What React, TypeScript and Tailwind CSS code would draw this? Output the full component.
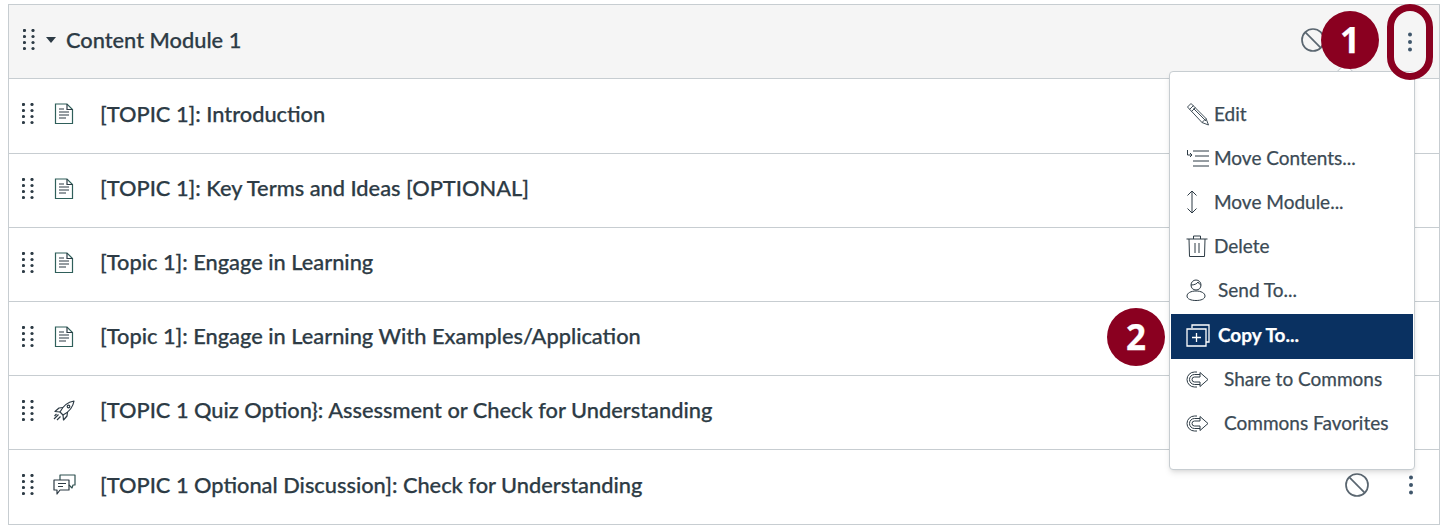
import React from "react";

const Grip = () => (
  <svg width="12" height="22" viewBox="0 0 12 22" className="shrink-0 text-[#2d3b45]" fill="currentColor">
    {[1.5, 7.5, 13.5, 19.5].flatMap((y) => [1.5, 10].map((x) => <circle key={`${x}-${y}`} cx={x} cy={y} r="1.6" />))}
  </svg>
);

const PageIcon = () => (
  <svg width="20" height="22" viewBox="0 0 20 22" fill="none" stroke="#2d3b45" strokeWidth="1.2">
    <path d="M1.500 1h11.500l5.500 5.500V20.500H1.500z" stroke="#2f5f5a" />
    <path d="M13 1v5.500h5.500" />
    <path d="M5 6h5M5 9h10M5 12h10M5 15h7" />
  </svg>
);

const RocketIcon = () => (
  <svg width="22" height="22" viewBox="0 0 22 22" fill="none" stroke="#2d3b45" strokeWidth="1.2" strokeLinejoin="round">
    <path d="M7 12 C10 6 15 2 21 1 C20 7 16 12 10 15z" />
    <path d="M7 12l-5-0.500 4-3.500 4-0.500M10 15l0.500 5 3.500-4 0.500-4" />
    <circle cx="15.500" cy="6.500" r="1.300" />
    <path d="M5.500 14.500L1 19M7.500 16.500L4 20M3.500 14L1.500 16" />
  </svg>
);

const ChatIcon = () => (
  <svg width="23" height="22" viewBox="0 0 23 22" fill="none" stroke="#2d3b45" strokeWidth="1.2" strokeLinejoin="round">
    <path d="M7 6V1h15v10h-2l-1 3-3-3" stroke="#2f5050" />
    <path d="M1 6h15v10H7l-3 4v-4H1z" />
    <path d="M5 9.500h8M5 12.500h5" />
  </svg>
);

const Ban = ({ size = 26 }: { size?: number }) => (
  <svg width={size} height={size} viewBox="0 0 26 26" fill="none" stroke="#5a6670" strokeWidth="1.700">
    <circle cx="13" cy="13" r="11" />
    <path d="M5.200 5.200l15.600 15.600" />
  </svg>
);

const Kebab = () => (
  <svg width="6" height="20" viewBox="0 0 6 20" fill="#3f566b">
    <circle cx="3" cy="2.500" r="2" />
    <circle cx="3" cy="10" r="2" />
    <circle cx="3" cy="17.500" r="2" />
  </svg>
);

const s = { fill: "none", stroke: "#2d3b45", strokeWidth: 1 };

const Edit = () => (
  <svg width="24" height="24" viewBox="0 0 24 24" {...s} stroke="#3f4d57">
    <path d="M1.500 5L5 1.500 20 16.500l2.500 6.500-6.500-2.500z" />
    <path d="M3.500 7.500L7.500 3.500M5.500 9.500l4-4M16 20.500l4-4M7.500 6.500l12.500 12.500" />
  </svg>
);
const MoveContents = () => (
  <svg width="24" height="18" viewBox="0 0 24 18" {...s}>
    <path d="M1.500 1v5h4M4 4l2 2-2 2" />
    <path d="M7 2h16M9 7h14M7 12h16M7 17h16" />
  </svg>
);
const MoveModule = () => (
  <svg width="12" height="24" viewBox="0 0 12 24" {...s}>
    <path d="M6 1v22M1.500 5.500L6 1l4.500 4.500M1.500 18.500L6 23l4.500-4.500" />
  </svg>
);
const Trash = () => (
  <svg width="22" height="22" viewBox="0 0 22 22" {...s}>
    <path d="M0.500 4h21M3 4l0.500 17.500h15L19 4M7.500 4V1h7v3M9 8v10M13 8v10" />
  </svg>
);
const Person = () => (
  <svg width="20" height="22" viewBox="0 0 20 22" {...s}>
    <path d="M5 6a5 5 0 0110 0c0 3-2 5-5 5s-5-2-5-5z" />
    <path d="M5 6c3 0 6-1 7-3 1 1.500 2 3 3 3" />
    <path d="M1 17c0-3 4-5 9-5s9 2 9 5-4 4.500-9 4.500S1 20 1 17z" />
  </svg>
);
const Copy = () => (
  <svg width="24" height="23" viewBox="0 0 24 23" fill="none" stroke="#fff" strokeWidth="1.300">
    <path d="M6 4V1h17v17h-3" />
    <path d="M1 5h19v17H1zM10.500 9v9M6 13.500h9" />
  </svg>
);
const Commons = () => (
  <svg width="23" height="17" viewBox="0 0 23 17" {...s}>
    <path d="M11 1H8.500a7.500 7.500 0 000 15H11" />
    <path d="M14 3.500H8.500a5 5 0 000 10H14" />
    <path d="M14 6H8.500a2.500 2.500 0 000 5H14" />
    <path d="M14 6V1.500l8 7-8 7V11" strokeLinejoin="round" />
  </svg>
);

const rows = [
  { icon: <PageIcon />, text: "[TOPIC 1]: Introduction", h: "h-[75px]" },
  { icon: <PageIcon />, text: "[TOPIC 1]: Key Terms and Ideas [OPTIONAL]", h: "h-[74px]" },
  { icon: <PageIcon />, text: "[Topic 1]: Engage in Learning", h: "h-[74px]" },
  { icon: <PageIcon />, text: "[Topic 1]: Engage in Learning With Examples/Application", h: "h-[74px]" },
  { icon: <RocketIcon />, text: "[TOPIC 1 Quiz Option}: Assessment or Check for Understanding", h: "h-[74px]" },
  { icon: <ChatIcon />, text: "[TOPIC 1 Optional Discussion]: Check for Understanding", h: "h-[74px]", end: true },
];

const menu = [
  { icon: <Edit />, label: "Edit", gap: "w-[28px]", cls: "h-[44px]" },
  { icon: <MoveContents />, label: "Move Contents...", gap: "w-[28px]", cls: "h-[44px]" },
  { icon: <MoveModule />, label: "Move Module...", gap: "w-[28px]", cls: "h-[44px]" },
  { icon: <Trash />, label: "Delete", gap: "w-[28px]", cls: "h-[44px]" },
  { icon: <Person />, label: "Send To...", gap: "w-[32px]", cls: "h-[44px]" },
  { icon: <Copy />, label: "Copy To...", gap: "w-[32px]", cls: "h-[45px] mt-[2px] pb-[3px] bg-[#0a3161] !text-white font-bold" },
  { icon: <Commons />, label: "Share to Commons", gap: "w-[38px]", cls: "h-[44px] pb-[4px]" },
  { icon: <Commons />, label: "Commons Favorites", gap: "w-[38px]", cls: "h-[44px] pb-[4px]" },
];

export default function App() {
  return (
    <div className="relative w-[1444px] h-[526px] overflow-hidden bg-white pt-[4px] pl-[8px] pr-[4px] font-['Lato','Noto_Sans',sans-serif] text-[#2d3b45] [-webkit-text-stroke:0.25px]">
      <div className="border border-[#c7cdd1] h-[521px] flex flex-col">
        <div className="h-[74px] shrink-0 bg-[#f5f5f5] flex items-center pl-[14px] pr-[26px] pb-[3px] border-b border-[#c7cdd1]">
          <Grip />
          <span className="ml-[11px] mr-[10px] w-0 h-0 border-x-[5px] border-x-transparent border-t-[6px] border-t-[#2d3b45]" />
          <span className="text-[21.8px] font-medium">Content Module 1</span>
          <span className="ml-auto mr-[81px] flex"><Ban /></span>
          <span className="flex mt-[3px]"><Kebab /></span>
        </div>
        {rows.map((r, i) => (
          <div key={i} className={`${r.h} shrink-0 flex items-center pl-[13px] pr-[25px] pb-[4px] ${i < rows.length - 1 ? "border-b border-[#c7cdd1]" : ""}`}>
            <Grip />
            <span className="w-[66px] shrink-0 flex pl-[18px]">
              <span className="w-[24px] flex justify-center">{r.icon}</span>
            </span>
            <span className="text-[21.8px] font-medium">{r.text}</span>
            {r.end && (
              <span className="ml-auto flex items-center gap-[38px]">
                <Ban />
                <Kebab />
              </span>
            )}
          </div>
        ))}
      </div>

      <div className="absolute left-[1338px] top-[66px] w-[14px] h-[14px] rotate-45 bg-white border-l border-t border-[#c7cdd1]" />
      <div className="absolute left-[1169px] top-[71px] w-[246px] h-[399px] bg-white border border-[#c7cdd1] rounded-[4px] shadow-md pt-[20px] px-[1px]">
        {menu.map((m) => (
          <div key={m.label} className={`flex items-center pl-[15px] text-[19px] text-[#3b4a55] ${m.cls}`}>
            <span className={`${m.gap} shrink-0 flex`}>{m.icon}</span>
            <span>{m.label}</span>
          </div>
        ))}
      </div>

      <div className="absolute left-[1321px] top-[11px] w-[58px] h-[58px] rounded-full bg-[#8a0020] text-white flex items-center justify-center text-[35px] font-bold font-['Open_Sans',sans-serif]">1</div>
      <div className="absolute left-[1107px] top-[308px] w-[58px] h-[58px] rounded-full bg-[#8a0020] text-white flex items-center justify-center text-[35px] font-bold font-['Open_Sans',sans-serif]">2</div>
      <div className="absolute left-[1387px] top-[4px] w-[46px] h-[76px] rounded-[23px] border-[7px] border-[#8a0020]" />
    </div>
  );
}
